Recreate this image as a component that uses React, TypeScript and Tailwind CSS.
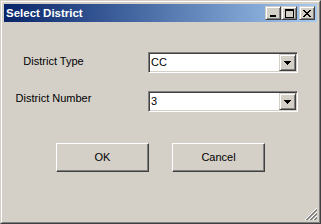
import React from "react";

const closeRows = ["xx....xx", ".xx..xx.", "..xxxx..", "...xx...", "..xxxx..", ".xx..xx.", "xx....xx"];

function Pixels({ rows, color }: { rows: string[]; color: string }) {
  const rects: React.ReactElement[] = [];
  rows.forEach((r, y) =>
    r.split("").forEach((c, x) => {
      if (c === "x") rects.push(<rect key={`${x}-${y}`} x={x} y={y} width={1} height={1} fill={color} />);
    })
  );
  return (
    <svg width={rows[0].length} height={rows.length} shapeRendering="crispEdges">
      {rects}
    </svg>
  );
}

function Grip() {
  const rects: React.ReactElement[] = [];
  for (let y = 0; y < 12; y++) {
    for (let x = 0; x < 12; x++) {
      const s = x + y;
      let fill = "";
      if (s === 11 || s === 15 || s === 19) fill = "#ffffff";
      else if (s === 12 || s === 13 || s === 16 || s === 17 || s === 20 || s === 21) fill = "#808080";
      if (fill) rects.push(<rect key={`${x}-${y}`} x={x} y={y} width={1} height={1} fill={fill} />);
    }
  }
  return (
    <svg width={12} height={12} shapeRendering="crispEdges">
      {rects}
    </svg>
  );
}

const raisedSmall =
  "border border-t-[#d4d0c8] border-l-[#d4d0c8] border-b-[#404040] border-r-[#404040] shadow-[inset_1px_1px_0_#ffffff,inset_-1px_-1px_0_#808080] bg-[#d4d0c8]";

function TitleButton({ children, className = "" }: { children: React.ReactNode; className?: string }) {
  return <div className={`w-[16px] h-[14px] flex ${raisedSmall} ${className}`}>{children}</div>;
}

function Combo({ value }: { value: string }) {
  return (
    <div className="w-[150px] h-[21px] flex bg-white border border-t-[#808080] border-l-[#808080] border-b-white border-r-white shadow-[inset_1px_1px_0_#404040,inset_-1px_-1px_0_#d4d0c8] p-px">
      <div className="flex-1 pl-px pt-[2px] text-[11px] leading-[13px] text-black">{value}</div>
      <div className={`w-[17px] h-[17px] flex items-center justify-center ${raisedSmall}`}>
        <svg width={7} height={4} shapeRendering="crispEdges">
          <polygon points="0,0 7,0 3.5,4" fill="#000" />
        </svg>
      </div>
    </div>
  );
}

function PushButton({ label }: { label: string }) {
  return (
    <div className="w-[93px] h-[29px] flex items-center justify-center bg-[#d4d0c8] border border-t-white border-l-white border-b-[#404040] border-r-[#404040] shadow-[inset_-1px_-1px_0_#808080] text-[11px] leading-[13px] text-black">
      {label}
    </div>
  );
}

export default function App() {
  return (
    <div
      className="w-[321px] h-[224px] bg-[#d4d0c8] border border-t-[#d4d0c8] border-l-[#d4d0c8] border-b-[#404040] border-r-[#404040]"
      style={{ fontFamily: '"Liberation Sans", Arial, sans-serif' }}
    >
      <div className="w-full h-full flex flex-col border border-t-white border-l-white border-b-[#808080] border-r-[#808080] p-[2px]">
        <div className="h-[18px] flex items-center bg-gradient-to-r from-[#0a246a] to-[#a6caf0] pl-[2px] pr-[2px]">
          <div className="flex-1 text-white font-bold text-[11.5px] leading-[14px]">Select District</div>
          <TitleButton className="items-end justify-center pb-[2px]">
            <div className="w-[6px] h-[2px] bg-black" />
          </TitleButton>
          <TitleButton className="items-center justify-center">
            <div className="w-[9px] h-[9px] border border-black border-t-2" />
          </TitleButton>
          <TitleButton className="ml-[2px] items-center justify-center">
            <Pixels rows={closeRows} color="#000" />
          </TitleButton>
        </div>
        <div className="flex-1 flex flex-col pt-[30px] text-black">
          <div className="flex items-start">
            <div className="ml-[4px] w-[91px] mt-[3px] text-center text-[11px] leading-[13px]">District Type</div>
            <div className="ml-[49px]">
              <Combo value="CC" />
            </div>
          </div>
          <div className="flex items-start mt-[18px]">
            <div className="ml-[4px] w-[91px] mt-[1px] text-center text-[11px] leading-[13px]">District Number</div>
            <div className="ml-[49px]">
              <Combo value="3" />
            </div>
          </div>
          <div className="flex mt-[31px] ml-[52px] gap-[23px]">
            <PushButton label="OK" />
            <PushButton label="Cancel" />
          </div>
          <div className="mt-auto flex justify-end">
            <Grip />
          </div>
        </div>
      </div>
    </div>
  );
}
